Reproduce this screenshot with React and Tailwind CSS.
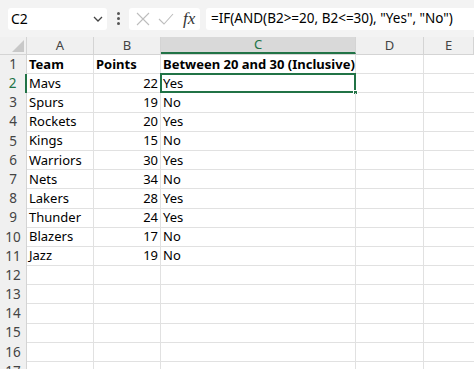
import React from "react";

const ROWS = [
  ["Team", "Points", "Between 20 and 30 (Inclusive)"],
  ["Mavs", "22", "Yes"],
  ["Spurs", "19", "No"],
  ["Rockets", "20", "Yes"],
  ["Kings", "15", "No"],
  ["Warriors", "30", "Yes"],
  ["Nets", "34", "No"],
  ["Lakers", "28", "Yes"],
  ["Thunder", "24", "Yes"],
  ["Blazers", "17", "No"],
  ["Jazz", "19", "No"],
  ["", "", ""],
  ["", "", ""],
  ["", "", ""],
  ["", "", ""],
  ["", "", ""],
  ["", "", ""],
];

const COLS = [
  { key: "A", w: "w-[67px]" },
  { key: "B", w: "w-[67px]" },
  { key: "C", w: "w-[195px]" },
  { key: "D", w: "w-[68px]" },
  { key: "E", w: "flex-1" },
];

export default function App() {
  return (
    <div className="w-[474px] h-[369px] overflow-hidden bg-white text-black" style={{ fontFamily: '"Noto Sans", "Open Sans", sans-serif' }}>
      {/* formula bar */}
      <div className="h-[37px] bg-[#f3f3f3] flex items-center pl-2">
        <div className="w-[99px] h-[22px] bg-white rounded-[3px] flex items-center justify-between pl-[3px] pr-[4px] text-[14px]">
          <span>C2</span>
          <svg width="10" height="6" viewBox="0 0 10 6" fill="none" stroke="#444" strokeWidth="1.3">
            <path d="M1 1l4 4 4-4" />
          </svg>
        </div>
        <div className="w-[22px] flex flex-col items-center gap-[2px]">
          <span className="w-[3px] h-[3px] bg-[#555] rounded-full" />
          <span className="w-[3px] h-[3px] bg-[#555] rounded-full" />
          <span className="w-[3px] h-[3px] bg-[#555] rounded-full" />
        </div>
        <div className="w-[71px] h-[22px] bg-white rounded-[3px] flex items-center pl-[7px]">
          <svg width="14" height="14" viewBox="0 0 14 14" fill="none" stroke="#bdbdbd" strokeWidth="1.1">
            <path d="M1 1l12 12M13 1L1 13" />
          </svg>
          <svg className="ml-[8px]" width="16" height="12" viewBox="0 0 16 12" fill="none" stroke="#bdbdbd" strokeWidth="1.1">
            <path d="M1 6l5 5L15 1" />
          </svg>
          <span className="ml-[9px] italic text-[17px] leading-none text-[#333]" style={{ fontFamily: '"Liberation Serif", serif' }}>fx</span>
        </div>
        <div className="ml-[6px] flex-1 h-[22px] bg-white rounded-l-[3px] flex items-center pl-[5px] text-[13.5px] whitespace-nowrap">
          =IF(AND(B2&gt;=20, B2&lt;=30), "Yes", "No")
        </div>
      </div>

      {/* column headers */}
      <div className="flex h-[18px] bg-[#f0f0f0] border-b border-[#d4d4d4] text-[13px] text-[#444]">
        <div className="w-[27px] border-r border-[#d4d4d4] relative">
          <svg className="absolute right-[2px] bottom-[2px]" width="12" height="12" viewBox="0 0 12 12">
            <path d="M12 0V12H0Z" fill="#c8c8c8" />
          </svg>
        </div>
        {COLS.map((c) => (
          <div
            key={c.key}
            className={`${c.w} flex items-center justify-center border-r border-[#d4d4d4] ${c.key === "C" ? "bg-[#d9d9d9] border-b-2 border-b-[#217346] text-[#217346]" : ""}`}
          >
            {c.key}
          </div>
        ))}
      </div>

      {/* rows */}
      {ROWS.map((r, i) => (
        <div key={i} className="flex h-[19.2px] text-[13px] leading-none">
          <div
            className={`w-[27px] flex items-center justify-center text-[13.5px] text-[#444] bg-[#f0f0f0] border-r border-[#d4d4d4] ${i === 1 ? "bg-[#d9d9d9] border-r-2 border-r-[#217346] text-[#217346]" : ""}`}
          >
            {i + 1}
          </div>
          <div className={`w-[67px] flex items-center pl-[2px] border-r border-b border-[#e1e1e1] whitespace-nowrap ${i === 0 ? "font-bold" : ""}`}>
            {r[0]}
          </div>
          <div className={`w-[67px] flex items-center border-r border-b border-[#e1e1e1] whitespace-nowrap ${i === 0 ? "font-bold pl-[2px]" : "justify-end pr-[2px]"}`}>
            {r[1]}
          </div>
          <div className={`w-[195px] relative flex items-center pl-[2px] border-r border-b border-[#e1e1e1] whitespace-nowrap ${i === 0 ? "font-bold" : ""}`}>
            {r[2]}
            {i === 1 && (
              <>
                <div className="absolute -left-[1px] -top-[1px] right-[-1px] bottom-[-1px] border-2 border-[#217346]" />
                <div className="absolute right-[-3px] bottom-[-3px] w-[5px] h-[5px] bg-[#217346] border border-white" />
              </>
            )}
          </div>
          <div className="w-[68px] border-r border-b border-[#e1e1e1]" />
          <div className="flex-1 border-b border-[#e1e1e1]" />
        </div>
      ))}
    </div>
  );
}
